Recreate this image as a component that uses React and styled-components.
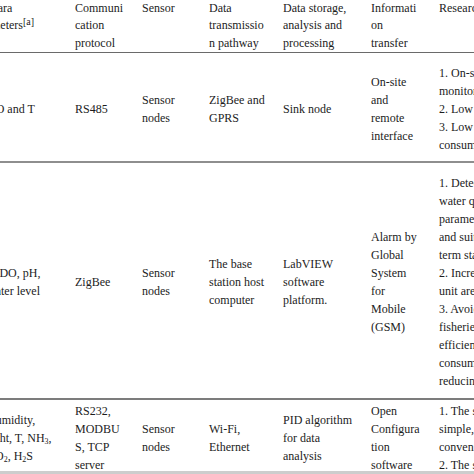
import React from "react";
import styled, { createGlobalStyle } from "styled-components";

const Global = createGlobalStyle`
  html, body { margin: 0; padding: 0; background: #ffffff; }
  body {
    font-family: "Liberation Serif", "Times New Roman", serif;
    color: #1c1c1c;
  }
`;

const Page = styled.div`
  width: 474px;
  height: 474px;
  overflow: hidden;
  box-sizing: border-box;
  border-bottom: 3px solid #cdcdcd;
`;

const Table = styled.div`
  margin-left: -13px;
  width: 620px;
  font-size: 12px;
  line-height: 18px;
`;

const Row = styled.div`
  display: grid;
  grid-template-columns: 88px 67px 67px 74px 88px 68px 168px;
  align-items: ${(p) => (p.$head ? "start" : "center")};
  line-height: ${(p) => (p.$head ? "17.3px" : "18px")};
  padding: ${(p) => p.$pad || "0"};
  border-bottom: ${(p) => p.$border || "2px solid #8e8e8e"};
`;

const Cell = styled.div`
  padding-left: ${(p) => p.$indent || 0}px;
  padding-right: ${(p) => (p.$gap === undefined ? 16 : p.$gap)}px;
  overflow-wrap: break-word;
  min-width: 0;
`;

const Lines = styled.div`
  white-space: nowrap;
`;

const Line = styled.div``;

const Sub = styled.sub`
  font-size: 8px;
  line-height: 0;
  vertical-align: -2px;
`;

const Sup = styled.sup`
  font-size: 10px;
  line-height: 0;
  vertical-align: 4px;
`;

const Stack = ({ items }) => (
  <Lines>
    {items.map((t, i) => (
      <Line key={i}>{t}</Line>
    ))}
  </Lines>
);

export default function App() {
  return (
    <>
      <Global />
      <Page>
        <Table>
          <Row $head $border="1px solid #6a6a6a">
            <Cell $indent={4}>
              Para<br />
              meters<Sup>[a]</Sup>
            </Cell>
            <Cell $gap={17}>Communication protocol</Cell>
            <Cell>Sensor</Cell>
            <Cell>Data transmission pathway</Cell>
            <Cell>Data storage, analysis and processing</Cell>
            <Cell $gap={18}>Information transfer</Cell>
            <Cell>Research</Cell>
          </Row>

          <Row $pad="11px 0 7px">
            <Cell>DO and T</Cell>
            <Cell $gap={17}>RS485</Cell>
            <Cell>Sensor nodes</Cell>
            <Cell>ZigBee and GPRS</Cell>
            <Cell>Sink node</Cell>
            <Cell $gap={18}>On-site and remote interface</Cell>
            <Cell>
              <Stack
                items={[
                  "1. On-site",
                  "monitoring",
                  "2. Low cost",
                  "3. Low power",
                  "consumption",
                ]}
              />
            </Cell>
          </Row>

          <Row $pad="11px 0 8px" $border="2px solid #7c7c7c">
            <Cell>T, DO, pH, water level</Cell>
            <Cell $gap={17}>ZigBee</Cell>
            <Cell>Sensor nodes</Cell>
            <Cell>The base station host computer</Cell>
            <Cell>LabVIEW software platform.</Cell>
            <Cell $gap={18}>Alarm by Global System for Mobile (GSM)</Cell>
            <Cell>
              <Stack
                items={[
                  "1. Detect the",
                  "water quality",
                  "parameters",
                  "and suitable long-",
                  "term stable",
                  "2. Increase the",
                  "unit area yield",
                  "3. Avoid",
                  "fisheries",
                  "efficiency",
                  "consumption,",
                  "reducing",
                ]}
              />
            </Cell>
          </Row>

          <Row $pad="2px 0 0" $border="none">
            <Cell>
              Humidity, light, T, NH<Sub>3</Sub>, CO<Sub>2</Sub>, H<Sub>2</Sub>S
            </Cell>
            <Cell $gap={17}>RS232, MODBUS, TCP server</Cell>
            <Cell>Sensor nodes</Cell>
            <Cell>Wi-Fi, Ethernet</Cell>
            <Cell>PID algorithm for data analysis</Cell>
            <Cell $gap={18}>Open Configuration software</Cell>
            <Cell>
              <Stack
                items={[
                  "1. The system is",
                  "simple, and",
                  "convenient",
                  "2. The system",
                ]}
              />
            </Cell>
          </Row>
        </Table>
      </Page>
    </>
  );
}
